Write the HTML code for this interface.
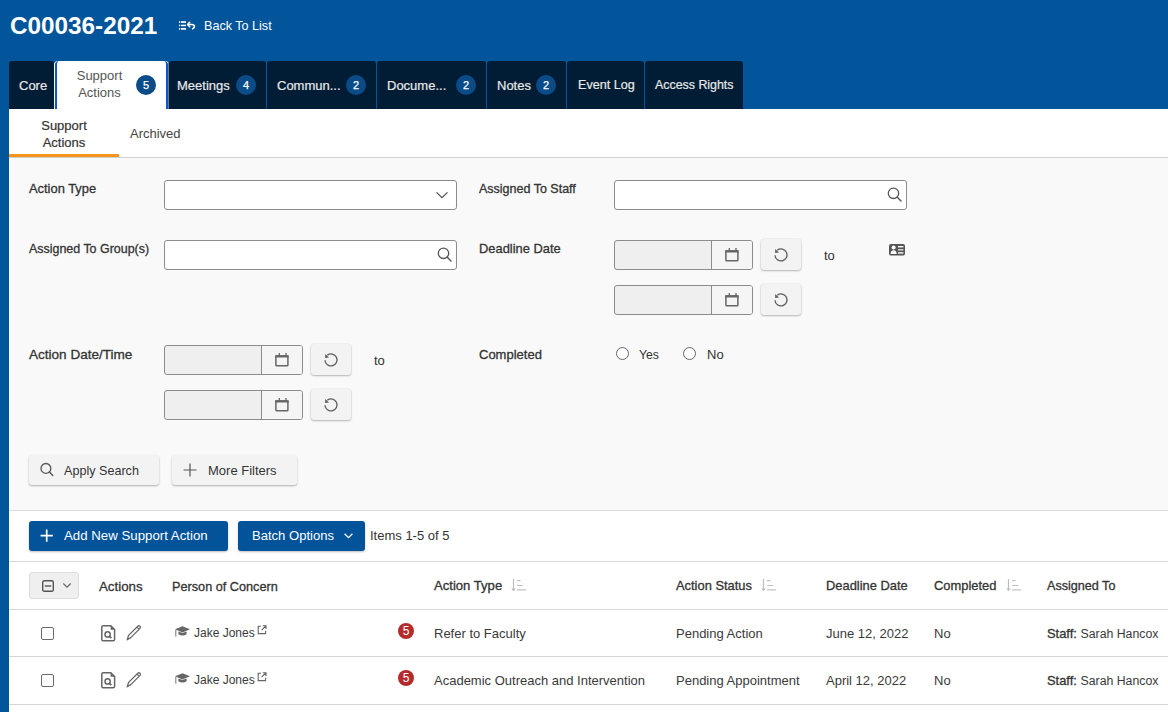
<!DOCTYPE html>
<html><head><meta charset="utf-8">
<style>
*{box-sizing:border-box;margin:0;padding:0}
html,body{width:1168px;height:712px;overflow:hidden}
body{background:#02549b;font-family:"Liberation Sans",sans-serif;color:#333;position:relative}
.a{position:absolute;white-space:nowrap;line-height:1}
svg{position:absolute;overflow:visible}
.title{left:10px;top:14px;font-size:24.3px;font-weight:700;color:#fff}
.back{left:204px;top:20px;font-size:12.6px;color:#fff}
.tab{position:absolute;top:61px;height:48px;background:#011d35;border-radius:3px 3px 0 0;color:#e8e8e8;font-size:13px}
.tab .t{position:absolute;top:18px;line-height:1;white-space:nowrap;-webkit-text-stroke:0.2px #e8e8e8}
.badge{position:absolute;width:20px;height:20px;border-radius:50%;background:#0a4b88;color:#fff;font-size:11px;line-height:21px;text-align:center;-webkit-text-stroke:0.25px #fff}
.sub{position:absolute;left:9px;top:109px;width:1159px;height:48px;background:#fff}
.filt{position:absolute;left:9px;top:158px;width:1159px;height:352px;background:#f9f9f9}
.lab{font-size:12.9px;color:#333;-webkit-text-stroke:0.3px #333}
.inp{position:absolute;height:30px;background:#fff;border:1px solid #8c8c8c;border-radius:3px}
.date{position:absolute;width:139px;height:30px;background:#efefef;border:1px solid #8c8c8c;border-radius:3px;overflow:hidden}
.date .cal{position:absolute;left:96px;top:0;width:41px;height:28px;background:#f5f5f5;border-left:1px solid #8c8c8c}
.rst{position:absolute;width:40px;height:31px;background:#f3f3f3;border-radius:3px;box-shadow:0 1px 2px rgba(0,0,0,.25),0 0 0 0.5px rgba(0,0,0,.06)}
.txt{font-size:13px;color:#333}
.btn{position:absolute;height:30px;background:#f3f3f3;border-radius:3px;box-shadow:0 1px 2px rgba(0,0,0,.3)}
.pbtn{position:absolute;height:30px;background:#02539a;border-radius:3px;box-shadow:0 1px 2px rgba(0,0,0,.25)}
.hd{font-size:12.9px;color:#333;-webkit-text-stroke:0.3px #333}
.cell{font-size:13px;color:#3a3a3a}
.hl{position:absolute;left:9px;width:1159px;height:1px;background:#d6d6d6}
</style></head><body>
<!-- header -->
<div class="a title">C00036-2021</div>
<svg style="left:174px;top:16px" width="30" height="20" viewBox="0 0 30 20">
 <g fill="#fff"><rect x="5" y="5.2" width="1.2" height="1.7"/><rect x="7" y="5.2" width="5" height="1.7"/>
 <rect x="5" y="8.7" width="1.2" height="1.5"/><rect x="7" y="8.7" width="5" height="1.5"/>
 <rect x="5" y="12" width="1.2" height="1.7"/><rect x="7" y="12" width="5" height="1.7"/></g>
 <g fill="none" stroke="#fff" stroke-width="1.6" stroke-linecap="round" stroke-linejoin="round">
 <path d="M15.6 6.4 L13.6 8.5 L15.6 10.6"/><path d="M13.8 8.5 H17.6 Q20.4 8.5 20.4 10.6 Q20.4 12.2 18.6 12.8"/></g>
</svg>
<div class="a back">Back To List</div>

<!-- tabs -->
<div class="tab" style="left:9px;width:45px"><span class="t" style="left:10px">Core</span></div>
<div class="a" style="left:54px;top:61px;width:115px;height:48px;background:#fff;border-radius:4px 4px 0 0"></div>
<div class="a" style="left:55px;top:61px;width:113px;height:48px;border-left:2px solid #0b55d0;border-right:2px solid #0b55d0;border-radius:4px 4px 0 0"></div>
<div class="a" style="left:168px;top:63px;width:1px;height:46px;background:#6f7a85"></div>
<div class="a" style="left:76px;top:68px;font-size:13px;color:#555;line-height:16.7px;text-align:center;white-space:normal;width:47px">Support Actions</div>
<div class="badge" style="left:136px;top:75px">5</div>

<div class="tab" style="left:169px;width:97px"><span class="t" style="left:8px">Meetings</span></div>
<div class="badge" style="left:236px;top:75px">4</div>
<div class="tab" style="left:267px;width:109px"><span class="t" style="left:10px">Commun...</span></div>
<div class="badge" style="left:346px;top:75px">2</div>
<div class="tab" style="left:377px;width:109px"><span class="t" style="left:10px">Docume...</span></div>
<div class="badge" style="left:456px;top:75px">2</div>
<div class="tab" style="left:487px;width:79px"><span class="t" style="left:10px">Notes</span></div>
<div class="badge" style="left:536px;top:75px">2</div>
<div class="tab" style="left:567px;width:77px"><span class="t" style="left:11px;font-size:12.6px">Event Log</span></div>
<div class="tab" style="left:645px;width:98px"><span class="t" style="left:10px;font-size:12.4px">Access Rights</span></div>

<!-- subtabs -->
<div class="sub"></div>
<div class="a" style="left:36px;top:118px;width:56px;font-size:13px;color:#333;line-height:16.6px;text-align:center;white-space:normal;-webkit-text-stroke:0.2px #333">Support Actions</div>
<div class="a txt" style="left:130px;top:127px;color:#444">Archived</div>
<div class="a" style="left:9px;top:154px;width:110px;height:3px;background:#f7941d"></div>
<div class="hl" style="top:157px;background:#cfcfcf"></div>

<!-- filters -->
<div class="filt"></div>
<div class="a lab" style="left:29px;top:183px">Action Type</div>
<div class="inp" style="left:164px;top:180px;width:293px"></div>
<svg style="left:436px;top:192px" width="12" height="6" viewBox="0 0 12 6"><path d="M0.5 0.4 L6 5.6 L11.5 0.4" fill="none" stroke="#555" stroke-width="1.3"/></svg>

<div class="a lab" style="left:479px;top:183px;font-size:12.5px">Assigned To Staff</div>
<div class="inp" style="left:614px;top:180px;width:293px"></div>
<svg style="left:886px;top:187px" width="16" height="16" viewBox="0 0 16 16"><circle cx="7.5" cy="6.3" r="5.2" fill="none" stroke="#555" stroke-width="1.3"/><path d="M11.3 10.2 L15 14" stroke="#555" stroke-width="1.4" stroke-linecap="round"/></svg>

<div class="a lab" style="left:29px;top:243px;font-size:12.45px">Assigned To Group(s)</div>
<div class="inp" style="left:164px;top:240px;width:293px"></div>
<svg style="left:436px;top:247px" width="16" height="16" viewBox="0 0 16 16"><circle cx="7.5" cy="6.3" r="5.2" fill="none" stroke="#555" stroke-width="1.3"/><path d="M11.3 10.2 L15 14" stroke="#555" stroke-width="1.4" stroke-linecap="round"/></svg>

<div class="a lab" style="left:479px;top:243px;font-size:12.9px">Deadline Date</div>
<div class="date" style="left:614px;top:240px"><div class="cal"></div></div>
<svg style="left:725px;top:248px" width="14" height="14" viewBox="0 0 14 14"><rect x="0.9" y="3" width="12" height="9.8" rx="0.9" fill="none" stroke="#666" stroke-width="1.5"/><rect x="0.1" y="2.2" width="13.6" height="2.3" fill="#666"/><path d="M4.3 0 V3 M11 0 V3" stroke="#666" stroke-width="1.3"/></svg>
<div class="rst" style="left:761px;top:239px"></div>
<svg style="left:773px;top:247px" width="16" height="16" viewBox="0 0 16 16"><path d="M2 8.2 A6 6 0 1 0 4.4 3.1" fill="none" stroke="#5f5f5f" stroke-width="1.35"/><path d="M2.1 2.0 L2.1 5.9 L6.1 5.4 Z" fill="#5f5f5f"/></svg>
<div class="a txt" style="left:824px;top:249px">to</div>
<div class="date" style="left:614px;top:285px"><div class="cal"></div></div>
<svg style="left:725px;top:293px" width="14" height="14" viewBox="0 0 14 14"><rect x="0.9" y="3" width="12" height="9.8" rx="0.9" fill="none" stroke="#666" stroke-width="1.5"/><rect x="0.1" y="2.2" width="13.6" height="2.3" fill="#666"/><path d="M4.3 0 V3 M11 0 V3" stroke="#666" stroke-width="1.3"/></svg>
<div class="rst" style="left:761px;top:284px"></div>
<svg style="left:773px;top:292px" width="16" height="16" viewBox="0 0 16 16"><path d="M2 8.2 A6 6 0 1 0 4.4 3.1" fill="none" stroke="#5f5f5f" stroke-width="1.35"/><path d="M2.1 2.0 L2.1 5.9 L6.1 5.4 Z" fill="#5f5f5f"/></svg>
<svg style="left:889px;top:244px" width="16" height="12" viewBox="0 0 16 12"><rect x="0" y="0" width="16" height="11.6" rx="2" fill="#555"/><circle cx="4.6" cy="3.6" r="2" fill="#fff"/><path d="M1.6 10 Q1.6 6.3 4.6 6.3 Q7.6 6.3 7.6 10 Z" fill="#fff"/><rect x="9" y="2" width="5.4" height="1.4" fill="#fff"/><rect x="9" y="5.1" width="5.4" height="1.4" fill="#ddd"/><rect x="9" y="8.2" width="5.4" height="1.4" fill="#fff"/></svg>


<div class="a lab" style="left:29px;top:348px;font-size:13.55px">Action Date/Time</div>
<div class="a lab" style="left:479px;top:348px;font-size:13px">Completed</div>
<div class="date" style="left:164px;top:345px"><div class="cal"></div></div>
<svg style="left:275px;top:353px" width="14" height="14" viewBox="0 0 14 14"><rect x="0.9" y="3" width="12" height="9.8" rx="0.9" fill="none" stroke="#666" stroke-width="1.5"/><rect x="0.1" y="2.2" width="13.6" height="2.3" fill="#666"/><path d="M4.3 0 V3 M11 0 V3" stroke="#666" stroke-width="1.3"/></svg>
<div class="rst" style="left:311px;top:344px"></div>
<svg style="left:323px;top:352px" width="16" height="16" viewBox="0 0 16 16"><path d="M2 8.2 A6 6 0 1 0 4.4 3.1" fill="none" stroke="#5f5f5f" stroke-width="1.35"/><path d="M2.1 2.0 L2.1 5.9 L6.1 5.4 Z" fill="#5f5f5f"/></svg>
<div class="a txt" style="left:374px;top:354px">to</div>
<div class="date" style="left:164px;top:390px"><div class="cal"></div></div>
<svg style="left:275px;top:398px" width="14" height="14" viewBox="0 0 14 14"><rect x="0.9" y="3" width="12" height="9.8" rx="0.9" fill="none" stroke="#666" stroke-width="1.5"/><rect x="0.1" y="2.2" width="13.6" height="2.3" fill="#666"/><path d="M4.3 0 V3 M11 0 V3" stroke="#666" stroke-width="1.3"/></svg>
<div class="rst" style="left:311px;top:389px"></div>
<svg style="left:323px;top:397px" width="16" height="16" viewBox="0 0 16 16"><path d="M2 8.2 A6 6 0 1 0 4.4 3.1" fill="none" stroke="#5f5f5f" stroke-width="1.35"/><path d="M2.1 2.0 L2.1 5.9 L6.1 5.4 Z" fill="#5f5f5f"/></svg>
<svg style="left:616px;top:347px" width="14" height="14" viewBox="0 0 14 14"><circle cx="6.5" cy="6.5" r="6" fill="#fff" stroke="#666" stroke-width="1"/></svg>
<div class="a txt" style="left:639px;top:349px;font-size:12.2px">Yes</div>
<svg style="left:683px;top:347px" width="14" height="14" viewBox="0 0 14 14"><circle cx="6.5" cy="6.5" r="6" fill="#fff" stroke="#666" stroke-width="1"/></svg>
<div class="a txt" style="left:707px;top:348px">No</div>


<div class="btn" style="left:29px;top:455px;width:130px"></div>
<svg style="left:38px;top:461px" width="18" height="18" viewBox="0 0 18 18"><circle cx="7.9" cy="7.4" r="4.9" fill="none" stroke="#555" stroke-width="1.3"/><path d="M11.4 11 L14.8 14.4" stroke="#555" stroke-width="1.4" stroke-linecap="round"/></svg>
<div class="a txt" style="left:64px;top:465px;font-size:12.6px">Apply Search</div>
<div class="btn" style="left:172px;top:455px;width:125px"></div>
<svg style="left:183px;top:463px" width="14" height="14" viewBox="0 0 14 14"><path d="M7 0.5 V13.5 M0.5 7 H13.5" stroke="#555" stroke-width="1.2"/></svg>
<div class="a txt" style="left:208px;top:464px">More Filters</div>


<div class="hl" style="top:510px;background:#dcdcdc"></div>

<div class="a" style="left:9px;top:511px;width:1159px;height:201px;background:#fff"></div>
<div class="pbtn" style="left:29px;top:521px;width:199px"></div>
<svg style="left:40px;top:529px" width="14" height="14" viewBox="0 0 14 14"><path d="M6.7 0.6 V12.8 M0.6 6.7 H12.8" stroke="#fff" stroke-width="1.7"/></svg>
<div class="a" style="left:64px;top:529px;font-size:13.25px;color:#fff">Add New Support Action</div>
<div class="pbtn" style="left:238px;top:521px;width:127px"></div>
<div class="a" style="left:252px;top:529px;font-size:13.05px;color:#fff">Batch Options</div>
<svg style="left:344px;top:533px" width="9" height="6" viewBox="0 0 9 6"><path d="M0.6 0.8 L4.5 4.6 L8.4 0.8" fill="none" stroke="#fff" stroke-width="1.3"/></svg>
<div class="a txt" style="left:370px;top:529px">Items 1-5 of 5</div>
<div class="hl" style="top:561px"></div>
<div class="a" style="left:29px;top:572px;width:50px;height:27px;background:#efefef;border:1px solid #dedede;border-radius:3px"></div>
<svg style="left:42px;top:580px" width="12" height="12" viewBox="0 0 12 12"><rect x="0.7" y="0.7" width="10.6" height="10.6" rx="1.6" fill="none" stroke="#555" stroke-width="1.4"/><path d="M2.8 6 H9.2" stroke="#555" stroke-width="1.4"/></svg>
<svg style="left:63px;top:583px" width="8" height="5" viewBox="0 0 8 5"><path d="M0.3 0.5 L4 4.2 L7.7 0.5" fill="none" stroke="#666" stroke-width="1.1"/></svg>
<div class="a hd" style="left:99px;top:580px;font-size:13.3px">Actions</div>
<div class="a hd" style="left:172px;top:581px;font-size:12.7px">Person of Concern</div>
<div class="a hd" style="left:434px;top:579px;font-size:13.1px">Action Type</div>
<svg style="left:511px;top:579px" width="16" height="13" viewBox="0 0 16 13"><path d="M2.5 0 V11.4" stroke="#bdbdbd" stroke-width="1.2"/><path d="M0.2 9.6 L2.5 12.2 L4.8 9.6 Z" fill="#bdbdbd"/><path d="M6 1.6 H9.6 M6 6.5 H12.3 M6 10.9 H15.2" stroke="#c4c4c4" stroke-width="1.2"/></svg>
<div class="a hd" style="left:676px;top:580px">Action Status</div>
<svg style="left:761px;top:579px" width="16" height="13" viewBox="0 0 16 13"><path d="M2.5 0 V11.4" stroke="#bdbdbd" stroke-width="1.2"/><path d="M0.2 9.6 L2.5 12.2 L4.8 9.6 Z" fill="#bdbdbd"/><path d="M6 1.6 H9.6 M6 6.5 H12.3 M6 10.9 H15.2" stroke="#c4c4c4" stroke-width="1.2"/></svg>
<div class="a hd" style="left:826px;top:580px;font-size:12.9px">Deadline Date</div>
<div class="a hd" style="left:934px;top:580px;font-size:12.9px">Completed</div>
<svg style="left:1006px;top:579px" width="16" height="13" viewBox="0 0 16 13"><path d="M2.5 0 V11.4" stroke="#bdbdbd" stroke-width="1.2"/><path d="M0.2 9.6 L2.5 12.2 L4.8 9.6 Z" fill="#bdbdbd"/><path d="M6 1.6 H9.6 M6 6.5 H12.3 M6 10.9 H15.2" stroke="#c4c4c4" stroke-width="1.2"/></svg>
<div class="a hd" style="left:1047px;top:580px;font-size:12.6px">Assigned To</div>
<div class="hl" style="top:609px"></div>
<div class="a" style="left:41px;top:627px;width:13px;height:13px;border:1.5px solid #6b6b6b;border-radius:2px;background:#fff"></div>
<svg style="left:101px;top:625px" width="15" height="17" viewBox="0 0 15 17"><path d="M2.2 0.8 H9.8 L13.6 4.6 V14.2 Q13.6 15.7 12.1 15.7 H2.2 Q0.8 15.7 0.8 14.2 V2.3 Q0.8 0.8 2.2 0.8 Z" fill="none" stroke="#666" stroke-width="1.5"/><path d="M9.6 0.8 V4.8 H13.6 Z" fill="#666"/><circle cx="6.6" cy="9.4" r="2.6" fill="none" stroke="#666" stroke-width="1.5"/><path d="M8.4 11.3 L10.4 13.2" stroke="#666" stroke-width="1.8"/></svg>
<svg style="left:126px;top:625px" width="16" height="16" viewBox="0 0 16 16"><path d="M1.2 14.8 L2.6 10.4 L11.8 1.2 Q12.9 0.3 14 1.2 Q14.9 2.3 14 3.4 L4.8 12.6 Z" fill="none" stroke="#666" stroke-width="1.3" stroke-linejoin="round"/><path d="M11 2.2 L13 4.2" stroke="#666" stroke-width="1.2"/></svg>
<svg style="left:175px;top:626px" width="16" height="12" viewBox="0 0 16 12"><path d="M7.5 0.2 L15 3.3 L7.5 6.4 L0 3.3 Z" fill="#666"/><path d="M3.4 5.4 V8.2 Q7.5 10.6 11.6 8.2 V5.4 L7.5 7.1 Z" fill="#666"/><path d="M0.8 4 V10.6" stroke="#666" stroke-width="0.9"/></svg>
<div class="a cell" style="left:194px;top:626.5px;font-size:12px">Jake Jones</div>
<svg style="left:257px;top:625px" width="10" height="10" viewBox="0 0 10 10"><path d="M4 1.2 H1.2 V8.6 H8.6 V5.8" fill="none" stroke="#666" stroke-width="1.1"/><path d="M4.6 5.2 L8.8 1 M5.8 0.8 H9 V4" fill="none" stroke="#666" stroke-width="1.1"/></svg>
<div class="a" style="left:398px;top:623px;width:16px;height:16px;border-radius:50%;background:#b52a2a;color:#fff;font-size:12px;line-height:16px;text-align:center">5</div>
<div class="a cell" style="left:434px;top:626.5px">Refer to Faculty</div>
<div class="a cell" style="left:676px;top:626.5px">Pending Action</div>
<div class="a cell" style="left:826px;top:626.5px">June 12, 2022</div>
<div class="a cell" style="left:934px;top:626.5px">No</div>
<div class="a cell" style="left:1047px;top:626.5px"><span style="font-size:12.9px;-webkit-text-stroke:0.3px #333;color:#333">Staff:</span> <span style="font-size:12.3px">Sarah Hancox</span></div>
<div class="hl" style="top:656px"></div>
<div class="a" style="left:41px;top:674px;width:13px;height:13px;border:1.5px solid #6b6b6b;border-radius:2px;background:#fff"></div>
<svg style="left:101px;top:672px" width="15" height="17" viewBox="0 0 15 17"><path d="M2.2 0.8 H9.8 L13.6 4.6 V14.2 Q13.6 15.7 12.1 15.7 H2.2 Q0.8 15.7 0.8 14.2 V2.3 Q0.8 0.8 2.2 0.8 Z" fill="none" stroke="#666" stroke-width="1.5"/><path d="M9.6 0.8 V4.8 H13.6 Z" fill="#666"/><circle cx="6.6" cy="9.4" r="2.6" fill="none" stroke="#666" stroke-width="1.5"/><path d="M8.4 11.3 L10.4 13.2" stroke="#666" stroke-width="1.8"/></svg>
<svg style="left:126px;top:672px" width="16" height="16" viewBox="0 0 16 16"><path d="M1.2 14.8 L2.6 10.4 L11.8 1.2 Q12.9 0.3 14 1.2 Q14.9 2.3 14 3.4 L4.8 12.6 Z" fill="none" stroke="#666" stroke-width="1.3" stroke-linejoin="round"/><path d="M11 2.2 L13 4.2" stroke="#666" stroke-width="1.2"/></svg>
<svg style="left:175px;top:673px" width="16" height="12" viewBox="0 0 16 12"><path d="M7.5 0.2 L15 3.3 L7.5 6.4 L0 3.3 Z" fill="#666"/><path d="M3.4 5.4 V8.2 Q7.5 10.6 11.6 8.2 V5.4 L7.5 7.1 Z" fill="#666"/><path d="M0.8 4 V10.6" stroke="#666" stroke-width="0.9"/></svg>
<div class="a cell" style="left:194px;top:673.5px;font-size:12px">Jake Jones</div>
<svg style="left:257px;top:672px" width="10" height="10" viewBox="0 0 10 10"><path d="M4 1.2 H1.2 V8.6 H8.6 V5.8" fill="none" stroke="#666" stroke-width="1.1"/><path d="M4.6 5.2 L8.8 1 M5.8 0.8 H9 V4" fill="none" stroke="#666" stroke-width="1.1"/></svg>
<div class="a" style="left:398px;top:670px;width:16px;height:16px;border-radius:50%;background:#b52a2a;color:#fff;font-size:12px;line-height:16px;text-align:center">5</div>
<div class="a cell" style="left:434px;top:673.5px">Academic Outreach and Intervention</div>
<div class="a cell" style="left:676px;top:673.5px">Pending Appointment</div>
<div class="a cell" style="left:826px;top:673.5px">April 12, 2022</div>
<div class="a cell" style="left:934px;top:673.5px">No</div>
<div class="a cell" style="left:1047px;top:673.5px"><span style="font-size:12.9px;-webkit-text-stroke:0.3px #333;color:#333">Staff:</span> <span style="font-size:12.3px">Sarah Hancox</span></div>
<div class="hl" style="top:704px"></div>

</body></html>
